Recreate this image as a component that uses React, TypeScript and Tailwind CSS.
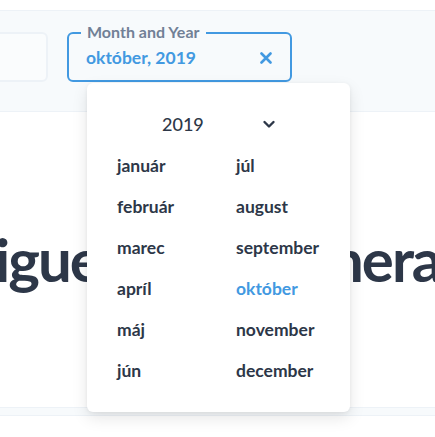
import React from "react";

const left = ["január", "február", "marec", "apríl", "máj", "jún"];
const right = ["júl", "august", "september", "október", "november", "december"];

export default function App() {
  const months: string[] = [];
  for (let i = 0; i < 6; i++) {
    months.push(left[i], right[i]);
  }
  return (
    <div className="relative w-[435px] h-[437px] overflow-hidden bg-white font-['Lato',sans-serif] text-[#2d3748]">
      <div className="h-[10px] bg-white" />
      <div className="h-[102px] border-t border-b border-[#edf2f7] bg-[#f7fafc] flex items-start pt-[21px] gap-[19px]">
        <div className="ml-[-52px] w-[100px] h-[50px] rounded-md border-2 border-[#edf2f7] bg-[#fafcfd]" />
        <div className="relative w-[225px] h-[50px] rounded-md border-2 border-[#4299e1] flex items-center pl-[17px] pr-[17px]">
          <span className="absolute left-[12px] top-[-13px] px-[6px] bg-[#f7fafc] text-[16px] leading-[22px] font-bold text-[#718096]">
            Month and Year
          </span>
          <span className="flex-1 mt-[2px] text-[17.5px] font-bold text-[#4299e1] leading-[24px]">október, 2019</span>
          <svg width="12" height="12" viewBox="0 0 12 12" className="mr-[1px] mt-[2px]">
            <path d="M1.5 1.5 L10.5 10.5 M10.5 1.5 L1.5 10.5" stroke="#4299e1" strokeWidth="2.6" strokeLinecap="round" />
          </svg>
        </div>
      </div>
      <div className="h-[295px] bg-white overflow-hidden relative">
        <div className="flex whitespace-nowrap text-[60px] font-bold leading-[64px] tracking-[-2px] mt-[115px] text-[#2d3748]">
          <span className="ml-[-5px] w-[335px] shrink-0">igue</span>
          <span className="shrink-0">nera</span>
        </div>
      </div>
      <div className="h-[9px] border-t border-b border-[#edf2f7] bg-[#f7fafc]" />
      <div className="pt-[18px] pl-0 text-[15px] leading-[20px] text-[#2d3748] whitespace-nowrap ml-[-1px]">
        litri i
      </div>

      <div className="absolute left-[87px] top-[83px] w-[263px] h-[329px] bg-white rounded-md shadow-[0_6px_16px_rgba(0,0,0,0.10),0_1px_4px_rgba(0,0,0,0.06)] pt-[27px]">
        <div className="relative h-[28px] flex items-center">
          <span className="absolute left-[75px] text-[18px] font-medium leading-[28px] text-[#2d3748]">2019</span>
          <svg width="14" height="10" viewBox="0 0 14 10" className="absolute left-[175px] top-[9px]">
            <path d="M2.5 3 L7 7.5 L11.5 3" stroke="#2d3748" strokeWidth="2.4" fill="none" strokeLinecap="round" strokeLinejoin="round" />
          </svg>
        </div>
        <div className="mt-[7px] pl-[30px] grid grid-cols-[119px_119px]">
          {months.map((m) => (
            <div
              key={m}
              className={
                m === "október"
                  ? "h-[41px] text-[17.5px] font-bold leading-[41px] text-[#4299e1]"
                  : "h-[41px] text-[17.5px] font-bold leading-[41px] text-[#2d3748]"
              }
            >
              {m}
            </div>
          ))}
        </div>
      </div>
    </div>
  );
}
